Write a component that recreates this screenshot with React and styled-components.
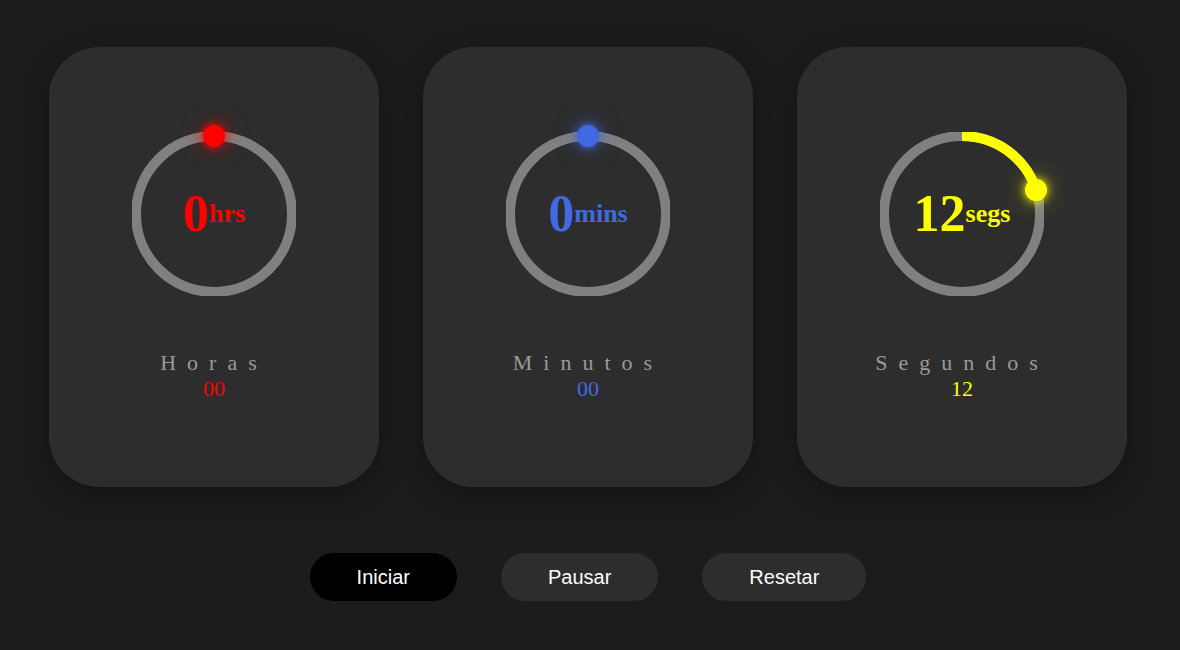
import React, { useState, useEffect, useRef } from 'react';
import styled, { createGlobalStyle } from 'styled-components';

const GlobalStyle = createGlobalStyle`
  * { box-sizing: border-box; }
  body {
    margin: 0;
    background: #1c1c1c;
    font-family: "Liberation Serif", "Times New Roman", serif;
  }
`;

const Page = styled.div`
  min-height: 650px;
  display: flex;
  flex-direction: column;
  align-items: center;
  padding: 47px 4px 0 0;
`;

const Cards = styled.div`
  display: flex;
  gap: 44px;
`;

const Card = styled.div`
  width: 330px;
  height: 440px;
  border-radius: 50px;
  background: #2d2d2d;
  box-shadow: 0 8px 28px rgba(0, 0, 0, 0.35);
  display: flex;
  flex-direction: column;
  align-items: center;
  padding-top: 85px;
`;

const Dial = styled.div`
  position: relative;
  width: 164px;
  height: 164px;
`;

const Ring = styled.svg`
  display: block;
  width: 164px;
  height: 164px;
`;

const Dot = styled.div`
  position: absolute;
  width: 22px;
  height: 22px;
  margin: -11px 0 0 -11px;
  border-radius: 50%;
  background: ${(p) => p.$color};
  box-shadow: 0 0 10px ${(p) => p.$color}, 0 0 24px ${(p) => p.$color}77;
`;

const Reading = styled.div`
  position: absolute;
  inset: 0;
  display: flex;
  align-items: center;
  justify-content: center;
  color: ${(p) => p.$color};
  font-weight: bold;
`;

const Big = styled.span`
  font-size: 52px;
  line-height: 1;
`;

const Unit = styled.span`
  font-size: 26px;
  vertical-align: 9px;
`;

const Label = styled.div`
  margin-top: 54px;
  font-size: 22px;
  letter-spacing: 11px;
  color: #9a9a9a;
`;

const Value = styled.div`
  font-size: 22px;
  color: ${(p) => p.$color};
`;

const Controls = styled.div`
  display: flex;
  gap: 44px;
  margin-top: 66px;
`;

const Button = styled.button`
  height: 48px;
  padding: 0 47px;
  border: none;
  border-radius: 24px;
  background: ${(p) => (p.$active ? '#000' : '#2d2d2d')};
  color: #fff;
  font-family: "Liberation Sans", Arial, sans-serif;
  font-size: 20px;
  cursor: pointer;
`;

const R = 78;
const C = 2 * Math.PI * R;

const TimeCard = ({ value, max, unit, label, color }) => {
  const frac = value / max;
  const angle = frac * 2 * Math.PI;
  // posição do ponto no anel
  const dx = 82 + R * Math.sin(angle);
  const dy = 82 - R * Math.cos(angle);
  return (
    <Card>
      <Dial>
        <Ring viewBox="0 0 164 164">
          <circle cx="82" cy="82" r={R} fill="none" stroke="#808080" strokeWidth="10" />
          {frac > 0 && (
            <circle
              cx="82"
              cy="82"
              r={R}
              fill="none"
              stroke={color}
              strokeWidth="10"
              strokeDasharray={C}
              strokeDashoffset={C * (1 - frac)}
              transform="rotate(-90 82 82)"
            />
          )}
        </Ring>
        <Dot $color={color} style={{ left: dx, top: dy }} />
        <Reading $color={color}>
          <Big>{value}</Big>
          <Unit>{unit}</Unit>
        </Reading>
      </Dial>
      <Label>{label}</Label>
      <Value $color={color}>{String(value).padStart(2, '0')}</Value>
    </Card>
  );
};

export default function App() {
  const [total, setTotal] = useState(12);
  const [running, setRunning] = useState(false);
  const timer = useRef(null);

  useEffect(() => {
    if (running) {
      timer.current = setInterval(() => setTotal((t) => t + 1), 1000);
    }
    return () => clearInterval(timer.current);
  }, [running]);

  const hrs = Math.floor(total / 3600) % 24;
  const mins = Math.floor(total / 60) % 60;
  const secs = total % 60;

  return (
    <Page>
      <GlobalStyle />
      <Cards>
        <TimeCard value={hrs} max={24} unit="hrs" label="Horas" color="#ff0000" />
        <TimeCard value={mins} max={60} unit="mins" label="Minutos" color="#4169e1" />
        <TimeCard value={secs} max={60} unit="segs" label="Segundos" color="#ffff00" />
      </Cards>
      <Controls>
        <Button $active onClick={() => setRunning(true)}>Iniciar</Button>
        <Button onClick={() => setRunning(false)}>Pausar</Button>
        <Button onClick={() => { setRunning(false); setTotal(0); }}>Resetar</Button>
      </Controls>
    </Page>
  );
}
